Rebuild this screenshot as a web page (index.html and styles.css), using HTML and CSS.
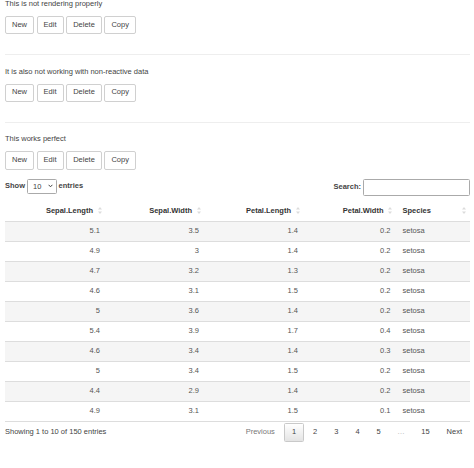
FILE: index.html
```html
<!DOCTYPE html>
<html lang="en">
<head>
    <meta charset="UTF-8">
    <meta name="viewport" content="width=device-width, initial-scale=1.0">
    <title>Iris table</title>
    <link rel="stylesheet" href="styles.css">
</head>
<body>
    <div class="page">
        <section class="block">
            <p class="label">This is not rendering properly</p>
            <div class="btn-row">
                <button class="btn">New</button>
                <button class="btn">Edit</button>
                <button class="btn">Delete</button>
                <button class="btn">Copy</button>
            </div>
        </section>
        <hr>
        <section class="block">
            <p class="label">It is also not working with non-reactive data</p>
            <div class="btn-row">
                <button class="btn">New</button>
                <button class="btn">Edit</button>
                <button class="btn">Delete</button>
                <button class="btn">Copy</button>
            </div>
        </section>
        <hr>
        <section class="block">
            <p class="label">This works perfect</p>
            <div class="btn-row">
                <button class="btn">New</button>
                <button class="btn">Edit</button>
                <button class="btn">Delete</button>
                <button class="btn">Copy</button>
            </div>
        </section>

        <div class="dt-wrapper">
            <div class="dt-top">
                <label class="dt-length">Show
                    <span class="select-wrap">
                        <select>
                            <option>10</option>
                            <option>25</option>
                            <option>50</option>
                            <option>100</option>
                        </select>
                        <svg class="chevron" width="5" height="4" viewBox="0 0 5 4"><path d="M0.6 0.8 L2.5 2.8 L4.4 0.8" fill="none" stroke="#444" stroke-width="1"/></svg>
                    </span>
                    entries</label>
                <label class="dt-filter">Search:<input type="search"></label>
            </div>

            <table class="dt-table">
                <colgroup>
                    <col style="width:101px">
                    <col style="width:99px">
                    <col style="width:99px">
                    <col style="width:92.5px">
                    <col style="width:73.5px">
                </colgroup>
                <thead>
                    <tr>
                        <th class="num">Sepal.Length<span class="sort"><svg width="4" height="7" viewBox="0 0 4 7"><path d="M2 0 L4 2.6 L0 2.6 Z M0 4.4 L4 4.4 L2 7 Z" fill="#dcdcdc"/></svg></span></th>
                        <th class="num">Sepal.Width<span class="sort"><svg width="4" height="7" viewBox="0 0 4 7"><path d="M2 0 L4 2.6 L0 2.6 Z M0 4.4 L4 4.4 L2 7 Z" fill="#dcdcdc"/></svg></span></th>
                        <th class="num">Petal.Length<span class="sort"><svg width="4" height="7" viewBox="0 0 4 7"><path d="M2 0 L4 2.6 L0 2.6 Z M0 4.4 L4 4.4 L2 7 Z" fill="#dcdcdc"/></svg></span></th>
                        <th class="num">Petal.Width<span class="sort"><svg width="4" height="7" viewBox="0 0 4 7"><path d="M2 0 L4 2.6 L0 2.6 Z M0 4.4 L4 4.4 L2 7 Z" fill="#dcdcdc"/></svg></span></th>
                        <th>Species<span class="sort"><svg width="4" height="7" viewBox="0 0 4 7"><path d="M2 0 L4 2.6 L0 2.6 Z M0 4.4 L4 4.4 L2 7 Z" fill="#dcdcdc"/></svg></span></th>
                    </tr>
                </thead>
                <tbody>
                    <tr><td class="num">5.1</td><td class="num">3.5</td><td class="num">1.4</td><td class="num">0.2</td><td>setosa</td></tr>
                    <tr><td class="num">4.9</td><td class="num">3</td><td class="num">1.4</td><td class="num">0.2</td><td>setosa</td></tr>
                    <tr><td class="num">4.7</td><td class="num">3.2</td><td class="num">1.3</td><td class="num">0.2</td><td>setosa</td></tr>
                    <tr><td class="num">4.6</td><td class="num">3.1</td><td class="num">1.5</td><td class="num">0.2</td><td>setosa</td></tr>
                    <tr><td class="num">5</td><td class="num">3.6</td><td class="num">1.4</td><td class="num">0.2</td><td>setosa</td></tr>
                    <tr><td class="num">5.4</td><td class="num">3.9</td><td class="num">1.7</td><td class="num">0.4</td><td>setosa</td></tr>
                    <tr><td class="num">4.6</td><td class="num">3.4</td><td class="num">1.4</td><td class="num">0.3</td><td>setosa</td></tr>
                    <tr><td class="num">5</td><td class="num">3.4</td><td class="num">1.5</td><td class="num">0.2</td><td>setosa</td></tr>
                    <tr><td class="num">4.4</td><td class="num">2.9</td><td class="num">1.4</td><td class="num">0.2</td><td>setosa</td></tr>
                    <tr><td class="num">4.9</td><td class="num">3.1</td><td class="num">1.5</td><td class="num">0.1</td><td>setosa</td></tr>
                </tbody>
            </table>

            <div class="dt-bottom">
                <div class="dt-info">Showing 1 to 10 of 150 entries</div>
                <div class="dt-paginate">
                    <a class="page-btn disabled">Previous</a>
                    <a class="page-btn current">1</a>
                    <a class="page-btn">2</a>
                    <a class="page-btn">3</a>
                    <a class="page-btn">4</a>
                    <a class="page-btn">5</a>
                    <span class="ellipsis">…</span>
                    <a class="page-btn">15</a>
                    <a class="page-btn">Next</a>
                </div>
            </div>
        </div>
    </div>
</body>
</html>
```

FILE: styles.css
```css
body {
    margin: 0px;
    padding: 0px;
    background-color: #ffffff;
    color: #444444;
    font-family: "Liberation Sans", Arial, sans-serif;
    font-size: 7.5px;
    line-height: 10.7px;
}

.page {
    margin-top: -1px;
    padding: 0px 4px 0px 5px;
}

.label {
    margin: 0px 0px 6.15px 0px;
}

.btn-row {
    display: flex;
    gap: 2.6px;
}

.btn {
    font-family: inherit;
    font-size: 7.5px;
    line-height: 10.7px;
    padding: 2.9px 6px;
    color: #444444;
    background-color: #ffffff;
    border: 1px solid #d0d0d0;
    border-radius: 2px;
}

hr {
    margin: 19.85px 0px 11.5px 0px;
    border: none;
    border-top: 1px solid #eeeeee;
}

/* datatable */
.dt-wrapper {
    margin-top: 9.3px;
}

.dt-top {
    display: flex;
    justify-content: space-between;
    align-items: flex-start;
}

.dt-length,
.dt-filter {
    display: flex;
    align-items: center;
    font-weight: bold;
    gap: 2px;
}

.dt-length {
    height: 15px;
}

.select-wrap {
    position: relative;
    display: inline-flex;
}

.select-wrap select {
    appearance: none;
    -webkit-appearance: none;
    width: 29.5px;
    height: 15px;
    padding: 0px 0px 0px 5px;
    font-family: inherit;
    font-size: 7.5px;
    color: #444444;
    background-color: #ffffff;
    border: 1px solid #aaaaaa;
    border-radius: 1.5px;
    outline: none;
}

.chevron {
    position: absolute;
    right: 4px;
    top: 5.5px;
}

.dt-filter input {
    width: 107px;
    height: 17px;
    box-sizing: border-box;
    margin: 0px;
    padding: 0px 3px;
    border: 1px solid #aaaaaa;
    border-radius: 1.5px;
    outline: none;
}

.dt-table {
    width: 465px;
    margin-top: 5px;
    table-layout: fixed;
    border-collapse: collapse;
}

.dt-table th {
    position: relative;
    padding: 4.65px 13px 4.65px 6px;
    text-align: left;
    font-weight: bold;
    color: #333333;
    border-bottom: 1px solid #dddddd;
}

.dt-table td {
    padding: 4.15px 6px;
    color: #555555;
    border-bottom: 1px solid #dddddd;
}

.dt-table .num {
    text-align: right;
}

.dt-table tbody tr:nth-child(odd) {
    background-color: #f5f5f5;
}

.sort {
    position: absolute;
    right: 4.5px;
    top: 6.5px;
    display: flex;
}

.dt-bottom {
    display: flex;
    justify-content: space-between;
    align-items: flex-start;
}

.dt-info {
    padding-top: 5.35px;
}

.dt-paginate {
    display: flex;
    padding-top: 1.3px;
}

.page-btn {
    margin-left: 1px;
    padding: 3.35px 7px;
    border: 1px solid transparent;
    border-radius: 1.5px;
    color: #444444;
    cursor: pointer;
}

.page-btn.disabled {
    color: #777777;
}

.page-btn.current {
    border-color: #c9c9c9;
    background: linear-gradient(#ffffff, #e4e4e4);
}

.ellipsis {
    margin-left: 1px;
    padding: 4.35px 7.5px;
    color: #aaaaaa;
}
```
